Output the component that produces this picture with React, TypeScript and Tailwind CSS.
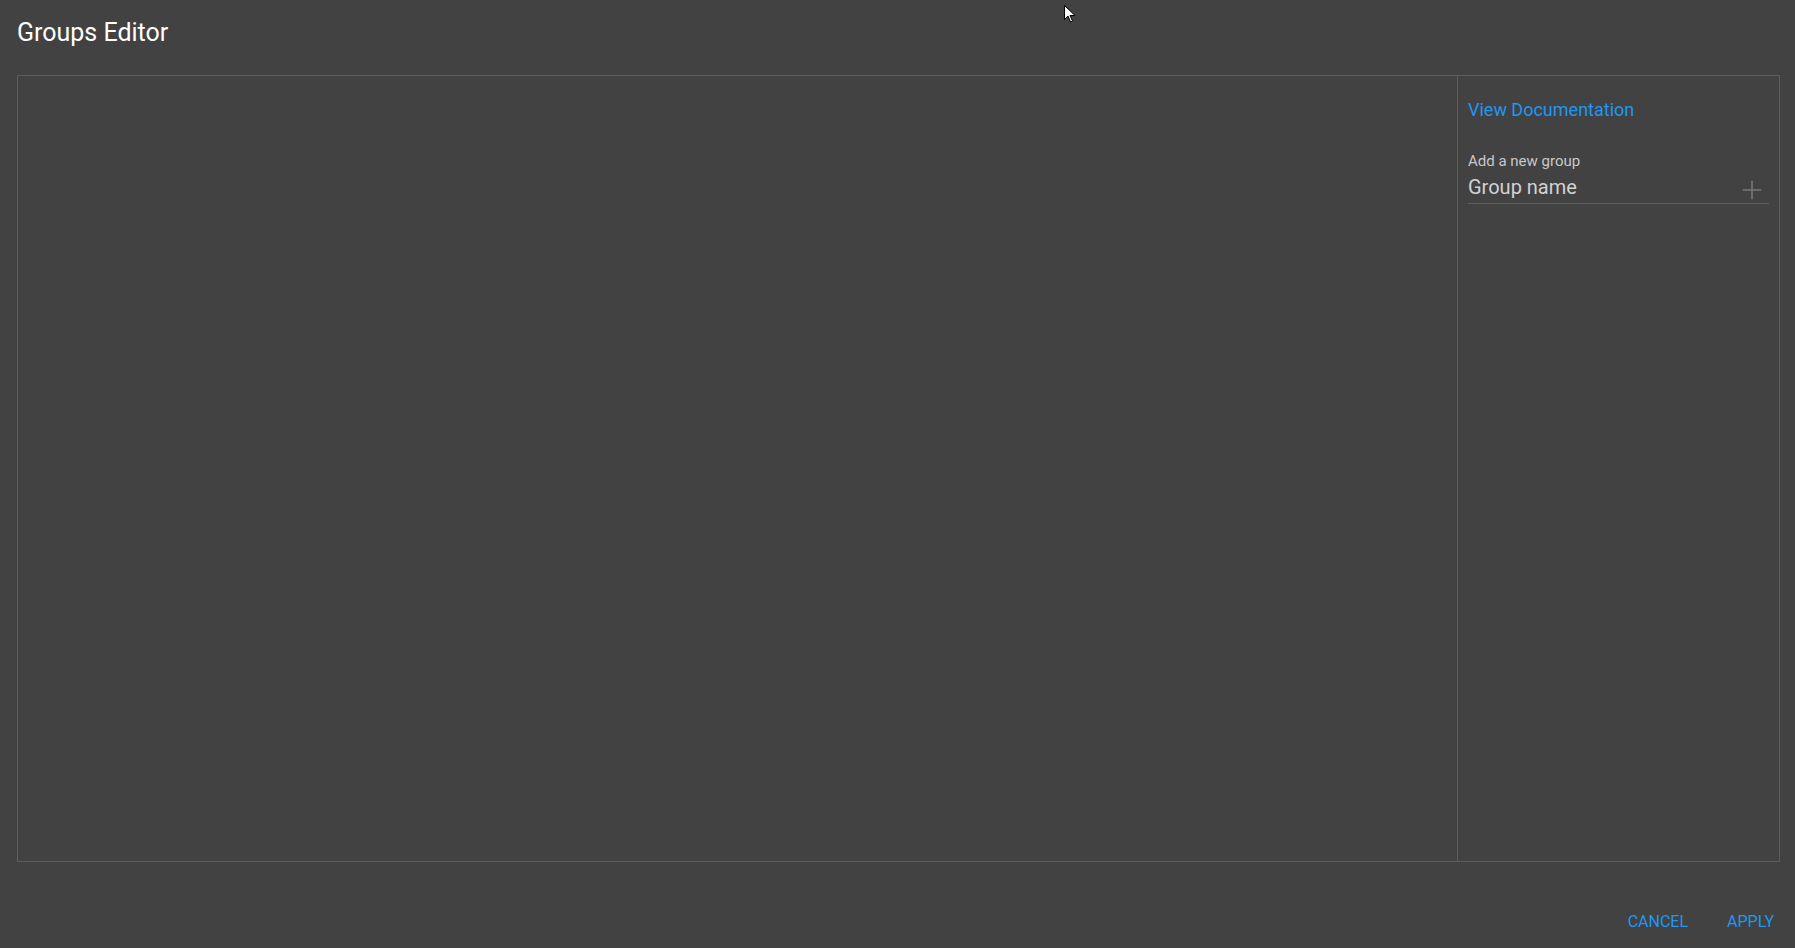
import { Plus } from 'lucide-react';

export default function App() {
  return (
    <div
      className="relative flex h-[948px] w-full flex-col bg-[#424242] pl-[17px] pr-[15px]"
      style={{ fontFamily: 'Roboto, "Noto Sans", sans-serif' }}
    >
      {/* mouse pointer in the capture */}
      <svg className="absolute left-[1064px] top-[5px]" width="12" height="18" viewBox="0 0 12 18">
        <path d="M0.5 0.5 L0.5 14.5 L4 11 L6.5 17 L8.5 16 L6 10.5 L11 10.5 Z" fill="#fff" stroke="#000" strokeWidth="1" />
      </svg>

      <h1 className="pt-[17px] text-[25px] leading-[32px] font-normal text-white">Groups Editor</h1>

      <div className="mt-[26px] flex h-[787px] border border-[#5c5c5c]">
        <div className="flex-1" />
        <div className="flex w-[322px] flex-col border-l border-[#5c5c5c] px-[10px] pt-[22px]">
          <a className="text-[18px] leading-[24px] text-[#2196f3]" href="#">
            View Documentation
          </a>
          <label className="mt-[29px] text-[15px] leading-[20px] text-[#c8c8c8]">Add a new group</label>
          <div className="mt-[2px] flex h-[31px] items-center justify-between border-b border-[#5c5c5c] pb-[3px]">
            <span className="text-[20px] leading-[28px] text-[#d2d2d2]">Group name</span>
            <Plus className="shrink-0 translate-x-[-2px] translate-y-[3px] text-[#777777]" size={30} strokeWidth={1.3} />
          </div>
        </div>
      </div>

      <div className="mt-[48px] flex justify-end gap-[39px] pr-[6px]">
        <button className="text-[16px] leading-[24px] text-[#2196f3]">CANCEL</button>
        <button className="text-[16px] leading-[24px] text-[#2196f3]">APPLY</button>
      </div>
    </div>
  );
}
